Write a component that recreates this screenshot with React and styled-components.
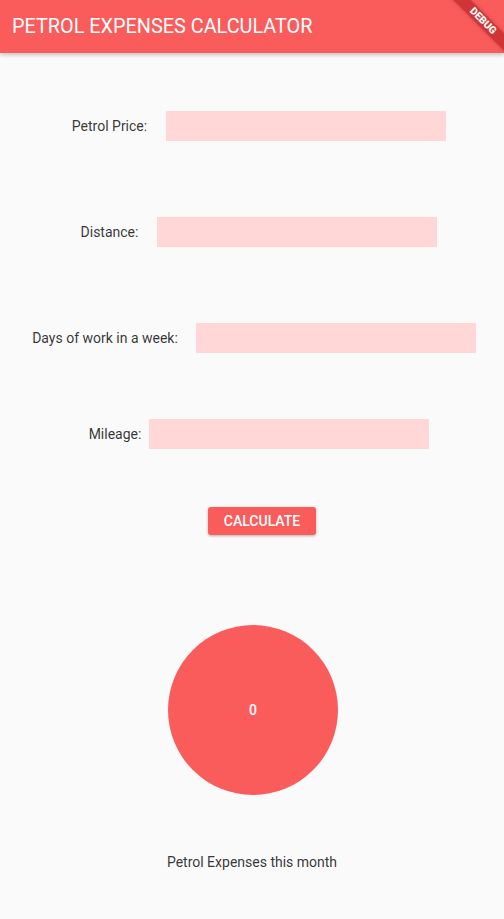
import React from 'react'
import styled, { createGlobalStyle } from 'styled-components'

const GlobalStyle = createGlobalStyle`
  html, body {
    margin: 0;
    padding: 0;
    background: #fafafa;
    font-family: Roboto, "Noto Sans", "Liberation Sans", sans-serif;
  }
`

const Screen = styled.div`
  position: relative;
  min-height: 919px;
  overflow: hidden;
  background: #fafafa;
`

const AppBar = styled.header`
  height: 53px;
  background: #fa5c5c;
  box-shadow: 0 2px 4px rgba(0, 0, 0, 0.22);
  display: flex;
  align-items: center;
  padding-left: 12px;
  position: relative;
  z-index: 1;
`

const Title = styled.h1`
  margin: 0;
  font-size: 19.85px;
  font-weight: 400;
  color: #fff;
`

const Banner = styled.div`
  position: absolute;
  top: 15px;
  left: 443px;
  width: 80px;
  height: 12px;
  transform: rotate(45deg);
  background: rgba(183, 28, 28, 0.63);
  box-shadow: 0 0 4px rgba(0, 0, 0, 0.25);
  color: #fff;
  font-size: 10.2px;
  font-weight: 900;
  line-height: 12px;
  text-align: center;
  z-index: 2;
`

const Form = styled.main`
  display: flex;
  flex-direction: column;
  align-items: center;
`

const Row = styled.div`
  align-self: stretch;
  display: flex;
  justify-content: center;
  align-items: center;
  margin-top: ${p => p.top}px;
  padding-left: ${p => p.shift}px;
  gap: ${p => p.gap}px;
  height: 30px;
`

const Label = styled.span`
  font-size: 14px;
  color: rgba(0, 0, 0, 0.8);
`

const Field = styled.div`
  width: 280px;
  height: 30px;
  background: #ffd7d7;
`

const Button = styled.button`
  margin: 58px 0 0 20px;
  width: 108px;
  height: 28px;
  border: none;
  border-radius: 3px;
  background: #fa5c5c;
  color: #fff;
  font-family: inherit;
  font-size: 14px;
  font-weight: 500;
  box-shadow: 0 1px 3px rgba(0, 0, 0, 0.3);
  padding: 0;
`

const Circle = styled.div`
  margin-top: 90px;
  margin-left: 2px;
  width: 170px;
  height: 170px;
  border-radius: 50%;
  background: #fa5c5c;
  display: flex;
  align-items: center;
  justify-content: center;
  color: #fff;
  font-size: 14px;
  font-weight: 500;
`

const Caption = styled.p`
  margin: 59px 0 0;
  font-size: 14px;
  color: rgba(0, 0, 0, 0.8);
`

const rows = [
  { label: 'Petrol Price:', top: 58, gap: 19, shift: 14 },
  { label: 'Distance:', top: 76, gap: 19, shift: 14 },
  { label: 'Days of work in a week:', top: 76, gap: 18, shift: 4 },
  { label: 'Mileage:', top: 66, gap: 8, shift: 14 },
]

export default function App() {
  return (
    <Screen>
      <GlobalStyle />
      <Banner>DEBUG</Banner>
      <AppBar>
        <Title>PETROL EXPENSES CALCULATOR</Title>
      </AppBar>
      <Form>
        {rows.map(r => (
          <Row key={r.label} top={r.top} gap={r.gap} shift={r.shift}>
            <Label>{r.label}</Label>
            <Field />
          </Row>
        ))}
        <Button>CALCULATE</Button>
        <Circle>0</Circle>
        <Caption>Petrol Expenses this month</Caption>
      </Form>
    </Screen>
  )
}
